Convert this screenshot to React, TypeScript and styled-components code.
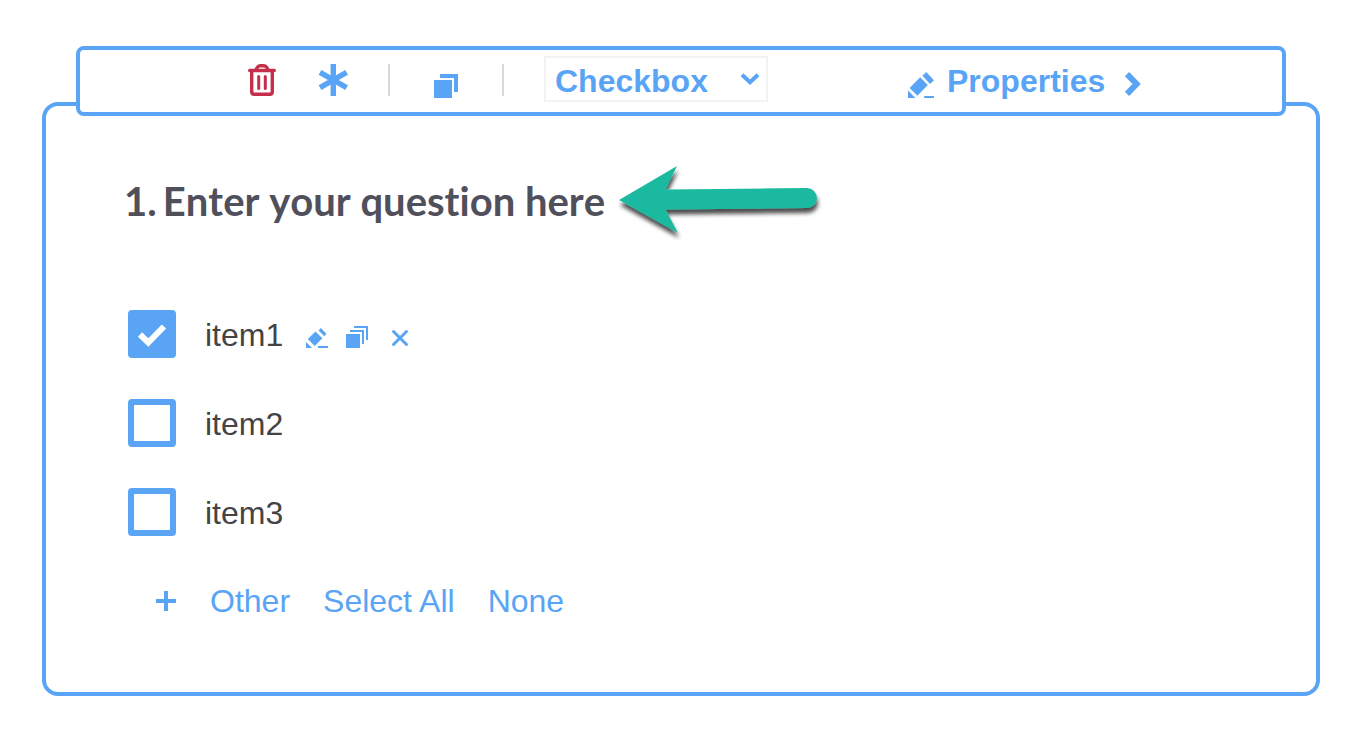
import React, { useState } from "react";
import styled, { createGlobalStyle } from "styled-components";

const blue = "#5aa4f5";

const GlobalStyle = createGlobalStyle`
  *, *::before, *::after { box-sizing: border-box; }
  body {
    margin: 0;
    background: #fff;
    font-family: "Liberation Sans", Arial, sans-serif;
    font-size: 32px;
    line-height: 36px;
    color: #444;
  }
  svg { display: block; flex: none; }
`;

const Page = styled.main`
  padding: 46px 38px 40px 42px;
`;

const Toolbar = styled.div`
  position: relative;
  z-index: 1;
  display: flex;
  align-items: center;
  margin: 0 34px -14px;
  padding: 6px 40px 8px 168px;
  background: #fff;
  border: 4px solid ${blue};
  border-radius: 8px;
`;

const Tools = styled.div`
  display: flex;
  align-items: center;
  gap: 40px;
`;

const IconButton = styled.button<{ $color?: string }>`
  display: flex;
  padding: 0;
  border: 0;
  background: none;
  color: ${(p) => p.$color ?? blue};
  cursor: pointer;
`;

const Divider = styled.span`
  width: 2px;
  height: 32px;
  background: #d9d9d9;
`;

const LowIcon = styled.span`
  display: flex;
  padding: 12px 4px 0;
`;

const SelectWrap = styled.div`
  position: relative;
  padding-bottom: 2px;
  svg {
    position: absolute;
    right: 8px;
    top: 17px;
    pointer-events: none;
  }
`;

const TypeSelect = styled.select`
  display: block;
  appearance: none;
  width: 224px;
  height: 46px;
  padding: 4px 40px 0 9px;
  border: 2px solid #f2f2f2;
  border-radius: 0;
  background: #fff;
  color: ${blue};
  font: bold 32px/36px "Liberation Sans", Arial, sans-serif;
`;

const PropertiesButton = styled.button`
  display: flex;
  align-items: center;
  margin-left: 140px;
  padding: 2px 0 0;
  gap: 13px;
  border: 0;
  background: none;
  color: ${blue};
  font: bold 32px/36px "Liberation Sans", Arial, sans-serif;
  cursor: pointer;
`;

const IconSlot = styled.span`
  display: flex;
  padding-top: 8px;
`;

const ArrowSlot = styled.span`
  display: flex;
  padding: 6px 0 0 6px;
`;

const Card = styled.section`
  padding: 54px 78px 73px;
  border: 4px solid ${blue};
  border-radius: 16px;
`;

const TitleRow = styled.div`
  display: flex;
  align-items: center;
  gap: 13px;
`;

const Title = styled.h2`
  display: flex;
  gap: 6px;
  margin: 0;
  padding-top: 2px;
  font: bold 40px/48px Lato, sans-serif;
  font-variant-ligatures: none;
  font-kerning: none;
  color: #50505c;
`;

const Options = styled.ul`
  display: flex;
  flex-direction: column;
  gap: 41px;
  margin: 70px 0 0;
  padding: 0 0 0 4px;
  list-style: none;
`;

const Option = styled.li`
  display: flex;
  align-items: center;
  gap: 23px;
`;

const OptionLabel = styled.label`
  display: flex;
  gap: 29px;
  line-height: 50px;
  height: 48px;
`;

const CheckBox = styled.span`
  display: grid;
  width: 48px;
  height: 48px;
  > * { grid-area: 1 / 1; }
  svg { pointer-events: none; }
`;

const CheckInput = styled.input`
  appearance: none;
  width: 48px;
  height: 48px;
  margin: 0;
  border: 6px solid ${blue};
  border-radius: 4px;
  background: #fff;
  &:checked { background: ${blue}; }
`;

const OptionTools = styled.div`
  display: flex;
  align-items: flex-end;
  gap: 18px;
  padding-top: 6px;
`;

const AddRow = styled.div`
  display: flex;
  align-items: center;
  gap: 33px;
  margin-top: 47px;
  padding-left: 32px;
`;

const AddLinks = styled.div`
  display: flex;
  gap: 33px;
  padding-left: 1px;
`;

const AddLink = styled.a`
  color: ${blue};
  text-decoration: none;
`;

const TrashIcon = () => (
  <svg width="28" height="32" viewBox="0 0 28 32" fill="none" stroke="currentColor" strokeWidth="3" strokeLinecap="round" strokeLinejoin="round">
    <path strokeWidth="3.400" d="M1.700 6.500h24.600M8 5.500l1.200-2Q10.200 1.800 12 1.800h4q1.800 0 2.800 1.700l1.200 2M3.700 7v20.800q0 2.500 2.500 2.500h15.600q2.500 0 2.500-2.500V7" />
    <path d="M10.700 12.500v12M17.300 12.500v12" />
  </svg>
);

const RequiredIcon = () => (
  <svg width="32" height="32" viewBox="0 0 32 32" fill="none" stroke="currentColor" strokeWidth="5.400">
    <path d="M17.300 0v32M4 8.300l26.600 15.400M30.600 8.300L4 23.700" strokeLinejoin="round" />
  </svg>
);

const CopyIcon = () => (
  <svg width="24" height="24" viewBox="0 0 24 24" fill="currentColor">
    <path d="M0 6h18v18H0zM6 0h18v18h-4V4H6z" />
  </svg>
);

const PencilIcon = () => (
  <svg width="26" height="26" viewBox="0 0 26 26" fill="currentColor">
    <path d="M0 18.500L7.500 26H0z" />
    <path d="M12.200 5.200l7.600 7.800L9.400 23.800 1.600 16z" />
    <path d="M18.200 0l7.800 8.200-4 3.800-7.600-8.200z" />
    <path d="M16.200 24H26v2h-9.800z" />
  </svg>
);

const SmallPencilIcon = () => (
  <svg width="22" height="20" viewBox="0 0 22 20" fill="currentColor">
    <path d="M0 14l6 6H0z" />
    <path d="M9.500 3.400l6.900 6.900-7.700 7.700-6.900-6.900z" />
    <path d="M14.800 0L20.400 5.800l-2.200 2.400-5.600-5.800z" />
    <path d="M12 18h10v2H12z" />
  </svg>
);

const StackIcon = () => (
  <svg width="22" height="22" viewBox="0 0 22 22" fill="currentColor">
    <path d="M0 8h14v14H0zM4 4h14v14h-2V6H4zM8 0h14v14h-2V2H8z" />
  </svg>
);

const CloseIcon = () => (
  <svg width="28" height="20" viewBox="0 0 28 20" fill="none" stroke="currentColor" strokeWidth="3" strokeLinecap="round">
    <path d="M7.500 3.500l13 13M20.500 3.500l-13 13" />
  </svg>
);

const ChevronDown = () => (
  <svg width="20" height="12" viewBox="0 0 20 12" fill="none" stroke={blue} strokeWidth="4">
    <path d="M2 1.800l8 7.400 8-7.400" />
  </svg>
);

const ChevronRight = () => (
  <svg width="18" height="24" viewBox="0 0 18 24" fill="none" stroke="currentColor" strokeWidth="6">
    <path d="M3 2.200l9.600 9.800L3 21.800" />
  </svg>
);

const CheckMark = () => (
  <svg width="48" height="48" viewBox="0 0 48 48" fill="none" stroke="#fff" strokeWidth="6">
    <path d="M12 24.500l8.300 8L36 16.500" />
  </svg>
);

const PlusIcon = () => (
  <svg width="20" height="20" viewBox="0 0 20 20" fill="none" stroke="currentColor" strokeWidth="4">
    <path d="M10 0v20M0 10h20" />
  </svg>
);

const PointerArrow = () => (
  <svg width="204" height="80" viewBox="0 0 204 80" aria-hidden="true">
    <defs>
      <filter id="arrow-shadow" x="-10%" y="-20%" width="120%" height="150%">
        <feDropShadow dx="1" dy="5" stdDeviation="2" floodColor="#000" floodOpacity="0.7" />
      </filter>
    </defs>
    <path
      filter="url(#arrow-shadow)"
      fill="#1fb9a1"
      d="M1 40L59 6 47.500 29.500 189 28a10 10 0 0 1 0 20L47.500 49.500 60 73z"
    />
  </svg>
);

const items = ["item1", "item2", "item3"];

export default function App() {
  const [checked, setChecked] = useState<string[]>(["item1"]);
  const toggle = (name: string) =>
    setChecked((list) => (list.includes(name) ? list.filter((n) => n !== name) : [...list, name]));

  return (
    <>
      <GlobalStyle />
      <Page>
        <Toolbar>
          <Tools>
            <IconButton $color="#c62f4b" aria-label="Delete question"><TrashIcon /></IconButton>
            <IconButton aria-label="Required"><RequiredIcon /></IconButton>
            <Divider />
            <IconButton aria-label="Duplicate question"><LowIcon><CopyIcon /></LowIcon></IconButton>
            <Divider />
            <SelectWrap>
              <TypeSelect aria-label="Question type" defaultValue="Checkbox">
                <option>Checkbox</option>
              </TypeSelect>
              <ChevronDown />
            </SelectWrap>
          </Tools>
          <PropertiesButton>
            <IconSlot><PencilIcon /></IconSlot>
            Properties
            <ArrowSlot><ChevronRight /></ArrowSlot>
          </PropertiesButton>
        </Toolbar>
        <Card>
          <TitleRow>
            <Title>
              <span>1.</span>
              <span>Enter your question here</span>
            </Title>
            <PointerArrow />
          </TitleRow>
          <Options>
            {items.map((name, index) => (
              <Option key={name}>
                <OptionLabel>
                  <CheckBox>
                    <CheckInput type="checkbox" checked={checked.includes(name)} onChange={() => toggle(name)} />
                    {checked.includes(name) && <CheckMark />}
                  </CheckBox>
                  {name}
                </OptionLabel>
                {index === 0 && (
                  <OptionTools>
                    <IconButton aria-label="Edit item"><SmallPencilIcon /></IconButton>
                    <IconButton aria-label="Duplicate item"><StackIcon /></IconButton>
                    <IconButton aria-label="Remove item"><CloseIcon /></IconButton>
                  </OptionTools>
                )}
              </Option>
            ))}
          </Options>
          <AddRow>
            <IconButton aria-label="Add item"><PlusIcon /></IconButton>
            <AddLinks>
              <AddLink href="#other">Other</AddLink>
              <AddLink href="#select-all">Select All</AddLink>
              <AddLink href="#none">None</AddLink>
            </AddLinks>
          </AddRow>
        </Card>
      </Page>
    </>
  );
}
